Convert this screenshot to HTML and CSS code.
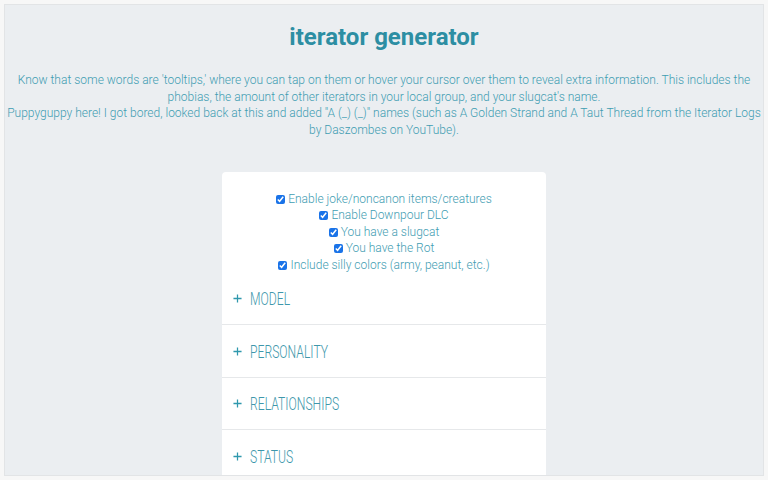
FILE: index.html
```html
<!DOCTYPE html>
<html>
<head>
<meta charset="utf-8">
<link rel="stylesheet" href="styles.css">
</head>
<body>
<div class="frame">
  <h1 class="title">iterator generator</h1>
  <p class="intro">Know that some words are 'tooltips,' where you can tap on them or hover your cursor over them to reveal extra information. This includes the phobias, the amount of other iterators in your local group, and your slugcat's name.<br>Puppyguppy here! I got bored, looked back at this and added "A (_) (_)" names (such as A Golden Strand and A Taut Thread from the Iterator Logs by Daszombes on YouTube).</p>
  <div class="card">
    <div class="options">
      <label class="opt"><input type="checkbox" checked>Enable joke/noncanon items/creatures</label>
      <label class="opt"><input type="checkbox" checked>Enable Downpour DLC</label>
      <label class="opt"><input type="checkbox" checked>You have a slugcat</label>
      <label class="opt"><input type="checkbox" checked>You have the Rot</label>
      <label class="opt"><input type="checkbox" checked>Include silly colors (army, peanut, etc.)</label>
    </div>
    <div class="section first"><svg class="plus" viewBox="0 0 10 10" width="10" height="10"><path d="M5 0.5V9.5M0.5 5H9.5" stroke="currentColor" stroke-width="1.4" fill="none"/></svg><span class="label">MODEL</span></div>
    <div class="section"><svg class="plus" viewBox="0 0 10 10" width="10" height="10"><path d="M5 0.5V9.5M0.5 5H9.5" stroke="currentColor" stroke-width="1.4" fill="none"/></svg><span class="label">PERSONALITY</span></div>
    <div class="section"><svg class="plus" viewBox="0 0 10 10" width="10" height="10"><path d="M5 0.5V9.5M0.5 5H9.5" stroke="currentColor" stroke-width="1.4" fill="none"/></svg><span class="label">RELATIONSHIPS</span></div>
    <div class="section last"><svg class="plus" viewBox="0 0 10 10" width="10" height="10"><path d="M5 0.5V9.5M0.5 5H9.5" stroke="currentColor" stroke-width="1.4" fill="none"/></svg><span class="label">STATUS</span></div>
  </div>
</div>
</body>
</html>
```
FILE: styles.css
```css
html, body {
  margin: 0;
  padding: 0;
  background: #f7f7f7;
}
.frame {
  margin: 4px 4px 0 4px;
  height: 472px;
  box-sizing: border-box;
  border: 1px solid #e2e4e6;
  background: #ebeef1;
  overflow: hidden;
  font-family: Roboto, "Liberation Sans", sans-serif;
}
.title {
  margin: 17px 0 0;
  text-align: center;
  font-family: Roboto, sans-serif;
  font-weight: 700;
  font-size: 24px;
  line-height: 30px;
  color: #2d8ea3;
}
.intro {
  margin: 20px 2px 0;
  text-align: center;
  font-weight: 300;
  font-size: 12px;
  line-height: 16.7px;
  color: #3f9db2;
}
.card {
  width: 324px;
  margin: 33px auto 0;
  background: #fff;
  border-radius: 4px;
  padding-top: 19px;
  padding-bottom: 40px;
}
.options {
  display: flex;
  flex-direction: column;
  align-items: center;
}
.opt {
  font-weight: 300;
  font-size: 12px;
  line-height: 16.5px;
  color: #3f9db2;
  display: flex;
  align-items: center;
}
.opt input {
  margin: 0 3px 0 0;
  width: 9px;
  height: 9px;
  accent-color: #1a73e8;
}
.section {
  height: 52.5px;
  box-sizing: border-box;
  border-bottom: 1px solid #e6e8ea;
  display: flex;
  align-items: center;
  padding-left: 11px;
  color: #3b96aa;
}
.section.first {
  height: 52px;
}
.section.last {
  border-bottom: none;
}
.plus {
  width: 9px;
  height: 9px;
  margin-right: 8px;
  color: #2f98ad;
  flex: none;
}
.label {
  display: inline-block;
  font-family: Roboto, sans-serif;
  font-weight: 300;
  font-size: 19px;
  transform: scaleX(0.64);
  transform-origin: left center;
  color: #3e97ab;
  white-space: nowrap;
}
```
